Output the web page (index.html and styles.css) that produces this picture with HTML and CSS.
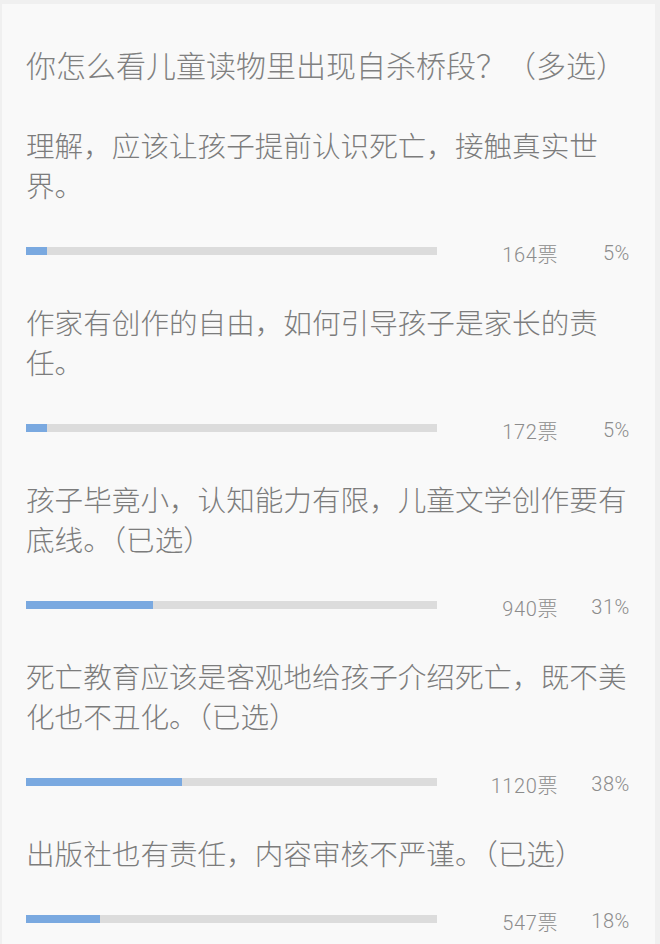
FILE: index.html
```html
<!DOCTYPE html>
<html lang="zh-CN">
<head>
    <meta charset="UTF-8">
    <meta name="viewport" content="width=device-width, initial-scale=1.0">
    <title>投票结果</title>
    <link rel="stylesheet" href="styles.css">
</head>
<body>
    <div class="card">
        <div class="title">你怎么看儿童读物里出现自杀桥段？（多选）</div>

        <div class="option">
            <div class="option-text">理解，应该让孩子提前认识死亡，接触真实世界。</div>
            <div class="stats">
                <div class="track"><div class="fill" style="width: 5%"></div></div>
                <span class="votes">164票</span>
                <span class="percent">5%</span>
            </div>
        </div>

        <div class="option">
            <div class="option-text">作家有创作的自由，如何引导孩子是家长的责任。</div>
            <div class="stats">
                <div class="track"><div class="fill" style="width: 5%"></div></div>
                <span class="votes">172票</span>
                <span class="percent">5%</span>
            </div>
        </div>

        <div class="option">
            <div class="option-text">孩子毕竟小，认知能力有限，儿童文学创作要有底线。（已选）</div>
            <div class="stats">
                <div class="track"><div class="fill" style="width: 31%"></div></div>
                <span class="votes">940票</span>
                <span class="percent">31%</span>
            </div>
        </div>

        <div class="option">
            <div class="option-text">死亡教育应该是客观地给孩子介绍死亡，既不美化也不丑化。（已选）</div>
            <div class="stats">
                <div class="track"><div class="fill" style="width: 38%"></div></div>
                <span class="votes">1120票</span>
                <span class="percent">38%</span>
            </div>
        </div>

        <div class="option">
            <div class="option-text">出版社也有责任，内容审核不严谨。（已选）</div>
            <div class="stats">
                <div class="track"><div class="fill" style="width: 18%"></div></div>
                <span class="votes">547票</span>
                <span class="percent">18%</span>
            </div>
        </div>
    </div>
</body>
</html>
```

FILE: styles.css
```css
body {
    margin: 0;
    padding: 0;
    background-color: #f0f0f0;
    font-family: Roboto, "Noto Sans CJK SC", sans-serif;
    font-weight: 300;
    color: #7c7c7c;
}
.card {
    margin: 4px 5px 0 2px;
    min-height: 940px;
    box-sizing: border-box;
    background-color: #f9f9f9;
    padding: 43px 25px 0 24px;
}
.title {
    font-size: 30px;
    line-height: 40px;
    color: #808080;
    margin-bottom: 40px;
}
.option {
    margin-bottom: 43px;
}
.option-text {
    font-size: 28.6px;
    line-height: 40px;
}
.stats {
    display: flex;
    align-items: center;
    height: 20px;
    margin-top: 34px;
}
.track {
    width: 411px;
    height: 8px;
    background-color: #dcdcdc;
}
.fill {
    height: 100%;
    background-color: #7aa9e0;
}
.votes {
    width: 121px;
    text-align: right;
    font-size: 20px;
    letter-spacing: 0.6px;
    color: #8c8c8c;
    padding-top: 4px;
}
.percent {
    width: 72px;
    text-align: right;
    font-size: 20px;
    letter-spacing: 0.6px;
    color: #8c8c8c;
    padding-top: 4px;
}
```
